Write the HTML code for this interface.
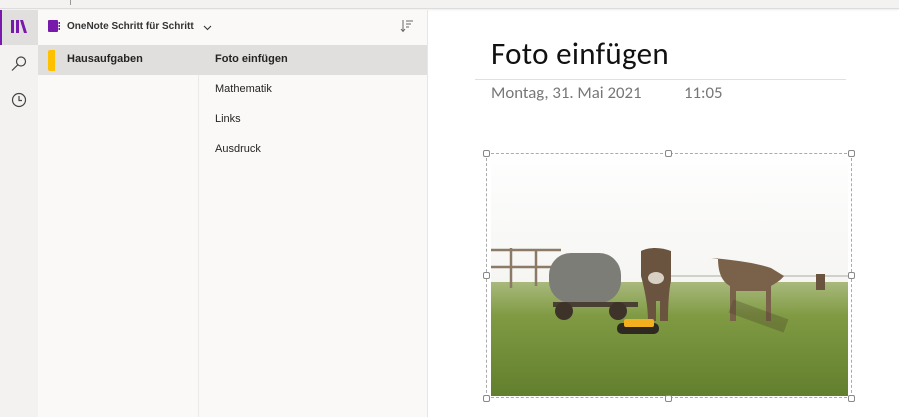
<!DOCTYPE html>
<html><head><style>
*{margin:0;padding:0;box-sizing:border-box}
body{width:899px;height:417px;overflow:hidden;background:#fff;font-family:"Segoe UI","Liberation Sans",sans-serif;position:relative}
.abs{position:absolute}
.t{font-size:11px;color:#252423}
.h{width:7px;height:7px;border:1px solid #888;background:#fff;border-radius:2px;position:absolute}
</style></head><body>
<div class="abs" style="left:0;top:0;width:899px;height:9px;background:#f3f2f1;border-bottom:1px solid #dcdcdc;box-shadow:0 1px 2px rgba(0,0,0,.08)"></div>
<div class="abs" style="left:70px;top:0;width:1px;height:5px;background:#999"></div>
<div class="abs" style="left:0;top:10px;width:38px;height:407px;background:#f3f2f1"></div>
<div class="abs" style="left:0;top:10px;width:38px;height:35px;background:#e1dfdd"></div>
<div class="abs" style="left:0;top:10px;width:2px;height:35px;background:#7719aa"></div>
<svg class="abs" style="left:10px;top:19px" width="18" height="16"><g fill="#7719aa"><rect x="1" y="1" width="3" height="13"/><rect x="6" y="1" width="3" height="13"/><polygon points="10,1 13,1 17,14 14,14"/></g></svg>
<svg class="abs" style="left:10px;top:55px" width="18" height="18" fill="none" stroke="#444" stroke-width="1.2"><circle cx="11" cy="6.5" r="4.5"/><line x1="7.8" y1="9.8" x2="2" y2="15.5"/></svg>
<svg class="abs" style="left:10px;top:91px" width="18" height="18" fill="none" stroke="#444" stroke-width="1.2"><circle cx="9" cy="9" r="6.5"/><path d="M9 5v4.5h3"/></svg>
<div class="abs" style="left:38px;top:10px;width:389px;height:407px;background:#faf9f8"></div>
<div class="abs" style="left:198px;top:45px;width:1px;height:372px;background:#eceae8"></div>
<div class="abs" style="left:427px;top:10px;width:1px;height:407px;background:#e8e6e4"></div>
<svg class="abs" style="left:47px;top:19px" width="14" height="14"><rect x="1" y="1" width="10" height="12" rx="1" fill="#7719aa"/><rect x="11.5" y="3" width="1.5" height="2" fill="#7719aa"/><rect x="11.5" y="6" width="1.5" height="2" fill="#7719aa"/><rect x="11.5" y="9" width="1.5" height="2" fill="#7719aa"/></svg>
<div class="abs t" style="left:67px;top:21px;font-size:10px;font-weight:bold;color:#333">OneNote Schritt für Schritt</div>
<svg class="abs" style="left:203px;top:25px" width="9" height="6" fill="none" stroke="#333" stroke-width="1.1"><path d="M1 1l3.5 3.5L8 1"/></svg>
<svg class="abs" style="left:400px;top:19px" width="14" height="14" fill="none" stroke="#666" stroke-width="1"><path d="M3 1v11M1 10l2 2.5 2-2.5M6 2h7M6 5h5M6 8h3"/></svg>
<div class="abs" style="left:38px;top:45px;width:389px;height:30px;background:#e1dfdd"></div>
<div class="abs" style="left:48px;top:50px;width:7px;height:21px;background:#ffc000;border-radius:2px 0 0 2px"></div>
<div class="abs t" style="left:67px;top:53px;font-weight:bold">Hausaufgaben</div>
<div class="abs t" style="left:215px;top:53px;font-weight:bold">Foto einfügen</div>
<div class="abs t" style="left:215px;top:83px">Mathematik</div>
<div class="abs t" style="left:215px;top:113px">Links</div>
<div class="abs t" style="left:215px;top:143px">Ausdruck</div>
<div class="abs" style="left:491px;top:35px;font-size:31px;color:#111;font-family:Carlito,'Liberation Sans',sans-serif;letter-spacing:0.3px">Foto einfügen</div>
<div class="abs" style="left:475px;top:79px;width:371px;height:1px;background:#e0e0e0"></div>
<div class="abs" style="left:491px;top:82px;font-size:16.8px;color:#767676;font-family:Carlito,'Liberation Sans',sans-serif">Montag, 31. Mai 2021</div>
<div class="abs" style="left:684px;top:82px;font-size:16.8px;color:#767676;font-family:Carlito,'Liberation Sans',sans-serif">11:05</div>
<div class="abs" style="left:486px;top:153px;width:366px;height:245px;border:1px dashed #aaa"></div>
<svg class="abs" style="left:491px;top:156px" width="357" height="240">
<defs><linearGradient id="sk" x1="0" y1="0" x2="0" y2="1"><stop offset="0" stop-color="#fefefe"/><stop offset="1" stop-color="#eeede8"/></linearGradient>
<linearGradient id="gr" x1="0" y1="0" x2="0" y2="1"><stop offset="0" stop-color="#a9b97c"/><stop offset=".3" stop-color="#7f9a42"/><stop offset="1" stop-color="#627f2e"/></linearGradient></defs>
<rect width="357" height="240" fill="url(#sk)"/>
<rect y="126" width="357" height="114" fill="url(#gr)"/>
<path d="M0 94h70M0 111h70M20 92v40M45 95v35" stroke="#8a7a66" stroke-width="2.5"/>
<path d="M180 120h180" stroke="#c4c4c0" stroke-width="1.5"/>
<rect x="58" y="97" width="72" height="50" rx="22" fill="#7d7d78"/>
<rect x="62" y="146" width="85" height="5" fill="#4a3f33"/>
<circle cx="73" cy="155" r="9" fill="#3d3329"/><circle cx="127" cy="155" r="9" fill="#3d3329"/>
<path d="M150 95c8-4 20-4 30 0v30c-2 8-3 25-3 40h-8v-20h-4v20h-8c0-15-3-30-7-45z" fill="#6a5440"/>
<ellipse cx="165" cy="122" rx="8" ry="6" fill="#d9d0c5"/>
<path d="M220 102c25 2 45 5 60 10l13 8c-5 6-10 8-13 10v35h-5v-30l-30 0v30h-6v-35c-9-5-12-15-12-28z" fill="#7a624a"/>
<rect x="325" y="118" width="9" height="16" fill="#6a5440"/>
<rect x="126" y="167" width="42" height="11" rx="5" fill="#2e2a22"/>
<rect x="133" y="163" width="30" height="8" rx="2" fill="#f2b01e"/>
<path d="M240 150l55 20" stroke="#4a4028" stroke-width="14" opacity=".3"/>
</svg>
<div class="h" style="left:483px;top:150px"></div>
<div class="h" style="left:665px;top:150px"></div>
<div class="h" style="left:848px;top:150px"></div>
<div class="h" style="left:483px;top:272px"></div>
<div class="h" style="left:848px;top:272px"></div>
<div class="h" style="left:483px;top:395px"></div>
<div class="h" style="left:665px;top:395px"></div>
<div class="h" style="left:848px;top:395px"></div>
</body></html>
